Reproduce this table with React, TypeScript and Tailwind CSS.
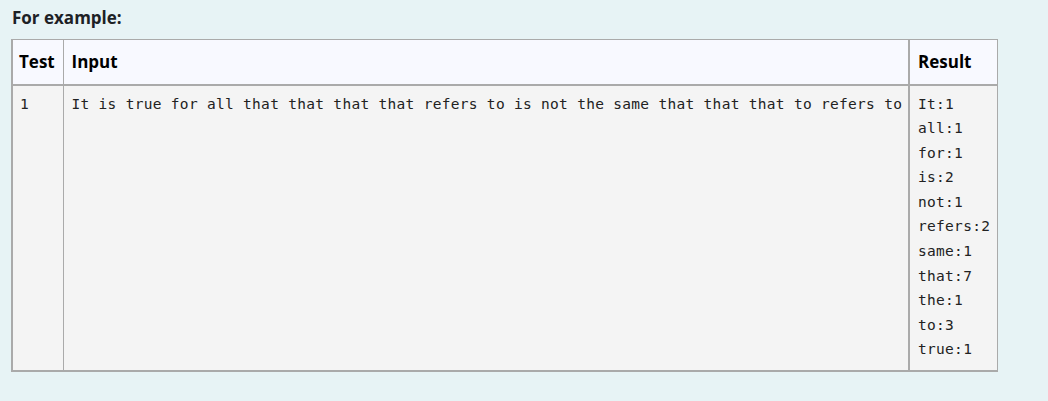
const RESULTS = ["It:1", "all:1", "for:1", "is:2", "not:1", "refers:2", "same:1", "that:7", "the:1", "to:3", "true:1"];

const INPUT =
  "It is true for all that that that that refers to is not the same that that that to refers to";

export default function App() {
  return (
    <div className="h-[401px] w-[1048px] bg-[#e7f3f5] pl-[11px] pt-[7px] font-['Open_Sans','Noto_Sans',sans-serif] text-[#1d2125]">
      <div className="text-[17px] font-bold leading-[22px] pl-[1px]">For example:</div>
      <table className="mt-[10px] border-collapse">
        <thead>
          <tr className="h-[45px] bg-[#f8f9ff] text-[17px] font-bold text-black">
            <th className="w-[51px] border-t border-b-2 border-l-2 border-r border-[#aaaaaa] pl-[6px] text-left">Test</th>
            <th className="w-[846px] border-t border-b-2 border-r-2 border-[#aaaaaa] pl-[8px] text-left">Input</th>
            <th className="w-[88px] border-t border-b-2 border-r border-[#aaaaaa] pl-[8px] pr-[6px] text-left">Result</th>
          </tr>
        </thead>
        <tbody className="bg-[#f4f4f4] font-['DejaVu_Sans_Mono','Liberation_Mono',monospace] text-[14.5px] tracking-[0.3px] text-[#222]">
          <tr>
            <td className="border-b-2 border-l-2 border-r border-[#aaaaaa] pl-[7px] pt-[6px] pb-[8px] align-top leading-[24.6px]">1</td>
            <td className="border-b-2 border-r-2 border-[#aaaaaa] pl-[8px] pt-[6px] pb-[8px] align-top leading-[24.6px] whitespace-pre">{INPUT}</td>
            <td className="border-b-2 border-r border-[#aaaaaa] pl-[8px] pt-[6px] pb-[8px] align-top leading-[24.6px]">
              {RESULTS.map((r) => (
                <div key={r}>{r}</div>
              ))}
            </td>
          </tr>
        </tbody>
      </table>
    </div>
  );
}
